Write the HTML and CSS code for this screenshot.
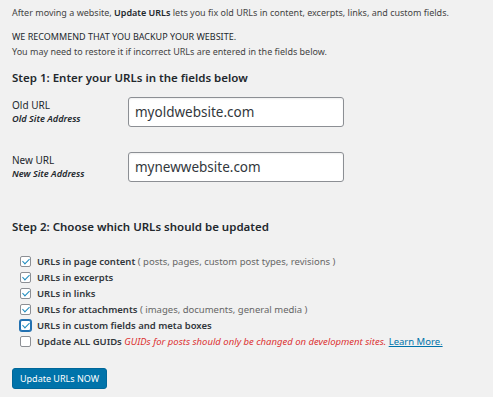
FILE: index.html
```html
<!DOCTYPE html>
<html>
<head>
<meta charset="utf-8">
<link rel="stylesheet" href="styles.css">
</head>
<body>
<div class="wrap">
  <p class="intro">After moving a website, <strong>Update URLs</strong> lets you fix old URLs in content, excerpts, links, and custom fields.</p>
  <p class="warn"><span class="caps">WE RECOMMEND THAT YOU BACKUP YOUR WEBSITE.</span><br>You may need to restore it if incorrect URLs are entered in the fields below.</p>
  <h3 class="step">Step 1: Enter your URLs in the fields below</h3>
  <div class="fields">
    <div class="field">
      <div class="label"><div class="lt">Old URL</div><div class="ls">Old Site Address</div></div>
      <div class="input">myoldwebsite.com</div>
    </div>
    <div class="field">
      <div class="label"><div class="lt">New URL</div><div class="ls">New Site Address</div></div>
      <div class="input">mynewwebsite.com</div>
    </div>
  </div>
  <h3 class="step step2">Step 2: Choose which URLs should be updated</h3>
  <ul class="checks">
    <li><span class="cb on"></span><span><strong>URLs in page content</strong> <span class="note">( posts, pages, custom post types, revisions )</span></span></li>
    <li><span class="cb on"></span><span><strong>URLs in excerpts</strong></span></li>
    <li><span class="cb on"></span><span><strong>URLs in links</strong></span></li>
    <li><span class="cb on"></span><span><strong>URLs for attachments</strong> <span class="note">( images, documents, general media )</span></span></li>
    <li><span class="cb on focus"></span><span><strong>URLs in custom fields and meta boxes</strong></span></li>
    <li><span class="cb"></span><span><strong>Update ALL GUIDs</strong> <em class="red">GUIDs for posts should only be changed on development sites.</em> <a class="more" href="#">Learn More.</a></span></li>
  </ul>
  <div class="btn">Update URLs NOW</div>
</div>
</body>
</html>
```
FILE: styles.css
```css
html, body {
  margin: 0;
  padding: 0;
  background: #f1f1f1;
}
body {
  font-family: "Noto Sans", "Open Sans", sans-serif;
  color: #23282d;
  font-size: 9px;
}
.wrap {
  padding: 6px 0 0 12px;
}
p { margin: 0; }
.intro {
  line-height: 13px;
  color: #444;
}
.intro strong { font-weight: 600; color: #23282d; }
.warn {
  margin-top: 10px;
  line-height: 15px;
  color: #444;
}
.caps { color: #23282d; }
.step {
  margin: 10px 0 0;
  font-size: 11.5px;
  font-weight: 600;
  line-height: 18px;
  color: #23282d;
}
.fields {
  display: flex;
  flex-direction: column;
  gap: 25px;
  margin-top: 10px;
}
.field {
  display: flex;
  align-items: flex-start;
}
.label {
  width: 116px;
  padding-top: 2px;
  line-height: 13px;
}
.lt { font-size: 10px; }
.ls { font-style: italic; font-weight: 600; font-size: 9.2px; }
.input {
  box-sizing: border-box;
  width: 216px;
  height: 30px;
  background: #fff;
  border: 1px solid #8c8f94;
  border-radius: 3px;
  box-shadow: inset 0 1px 2px rgba(0,0,0,0.07);
  padding: 0 6px;
  font-size: 13.5px;
  line-height: 28px;
  color: #32373c;
}
.step2 { margin-top: 36px; }
.checks {
  list-style: none;
  margin: 17px 0 0;
  padding: 0 0 0 8px;
}
.checks li {
  display: flex;
  align-items: center;
  gap: 6px;
  height: 16px;
  font-size: 9.5px;
}
.checks strong { font-weight: 600; color: #32373c; }
.note { color: #666; }
.cb {
  box-sizing: border-box;
  width: 11px;
  height: 11px;
  border: 1px solid #8c8f94;
  border-radius: 2px;
  background: #fff;
  position: relative;
  flex: none;
}
.cb.on::after {
  content: "";
  position: absolute;
  left: 3px;
  top: 0px;
  width: 3px;
  height: 6px;
  border: solid #1e8cbe;
  border-width: 0 1.7px 1.7px 0;
  transform: rotate(45deg);
}
.cb.focus {
  border-color: #2271b1;
  box-shadow: 0 0 0 1px #2271b1;
}
.red { color: #dc3232; }
.more { color: #0073aa; text-decoration: underline; }
.btn {
  display: inline-block;
  margin-top: 19px;
  background: #0073aa;
  border: 1px solid #006799;
  border-radius: 3px;
  color: #fff;
  font-size: 9px;
  line-height: 19px;
  padding: 0 7px;
}
```
